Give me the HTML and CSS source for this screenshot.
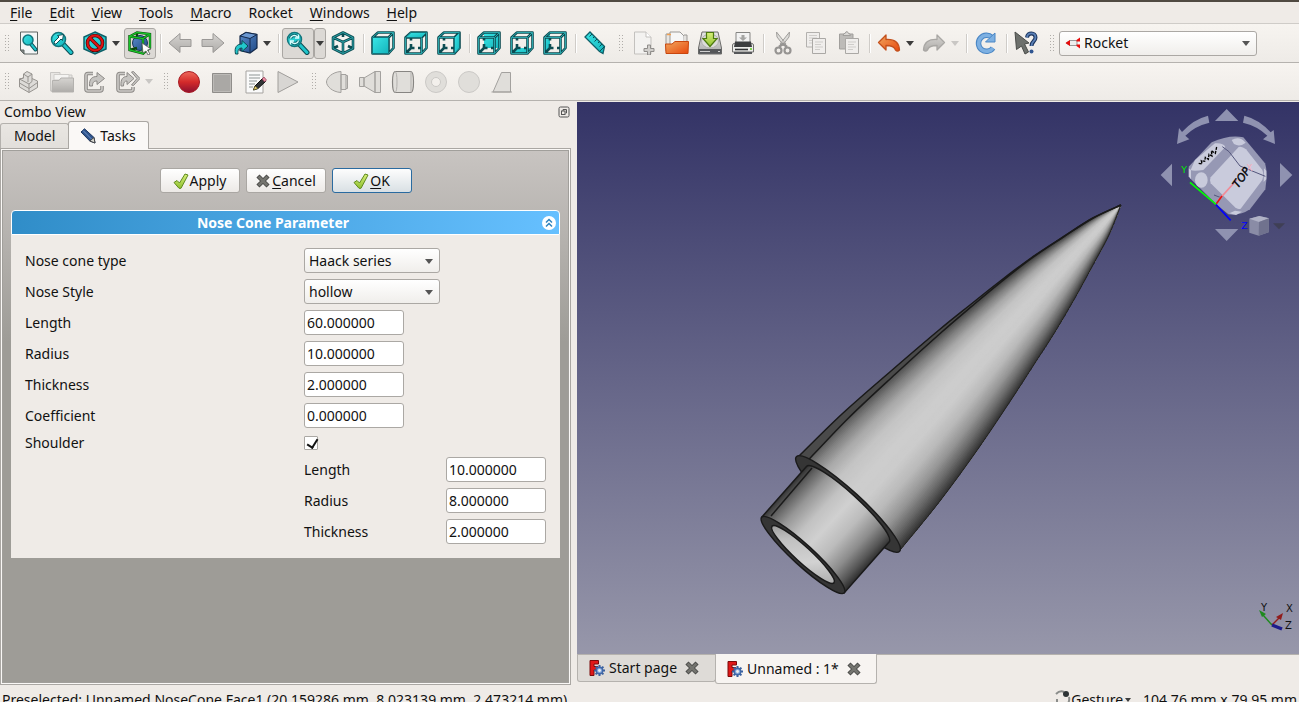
FILE: index.html
```html
<!DOCTYPE html>
<html lang="en">
<head>
<meta charset="utf-8">
<title>FreeCAD</title>
<link rel="stylesheet" href="styles.css">
</head>
<body>
<svg class="defs" aria-hidden="true">
  <defs>
    <linearGradient id="g-teal" x1="0" y1="0" x2="1" y2="1"><stop offset="0" stop-color="#3ae6e6"/><stop offset="1" stop-color="#14b4bc"/></linearGradient>
    <linearGradient id="g-orange" x1="0" y1="0" x2="1" y2="1"><stop offset="0" stop-color="#f0a860"/><stop offset="1" stop-color="#e8480c"/></linearGradient>
    <linearGradient id="g-gray" x1="0" y1="0" x2="0" y2="1"><stop offset="0" stop-color="#d6d4d1"/><stop offset="1" stop-color="#aeaca9"/></linearGradient>
    <linearGradient id="g-red" x1="0" y1="0" x2="0" y2="1"><stop offset="0" stop-color="#ee6a5c"/><stop offset=".5" stop-color="#d42a2a"/><stop offset="1" stop-color="#8e1030"/></linearGradient>
    <linearGradient id="g-metal" x1="0" y1="0" x2="0" y2="1"><stop offset="0" stop-color="#e8e8e8"/><stop offset="1" stop-color="#a8a8a8"/></linearGradient>
    <linearGradient id="g-green" x1="0" y1="0" x2="0" y2="1"><stop offset="0" stop-color="#d8f07a"/><stop offset="1" stop-color="#8fc030"/></linearGradient>
    <linearGradient id="g-blue" x1="0" y1="0" x2="1" y2="1"><stop offset="0" stop-color="#5b8ccb"/><stop offset="1" stop-color="#204a87"/></linearGradient>
    <symbol id="frame" viewBox="0 0 24 24">
      <path class="edge-dark" d="M1.500 22.500L7 17V13M7 9.500V6.500M7 17H10.500M14 17H17.500M1.500 6.500H17.500V22.500H1.500ZM1.500 6.500L7 1.500H22.500V17L17.500 22.500M17.500 6.500L22.500 1.500"/>
      <path class="edge-teal" d="M1.500 6.500H17.500V22.500H1.500ZM1.500 6.500L7 1.500H22.500V17L17.500 22.500M17.500 6.500L22.500 1.500"/>
    </symbol>
    <symbol id="lens" viewBox="0 0 24 24">
      <path d="M14 14L21 21.500" stroke="#0b4d54" stroke-width="5" stroke-linecap="round"/>
      <path d="M14 14L21 21.500" stroke="#1fc4ca" stroke-width="3" stroke-linecap="round"/>
      <circle cx="8.500" cy="8.500" r="7" fill="url(#g-teal)" stroke="#12757c" stroke-width="1.500"/>
    </symbol>
    <symbol id="tick" viewBox="0 0 16 16">
      <path d="M1 9.500L4 7.500L6.500 10L12 1L15 2L8 15.300L6 15.300Z" fill="url(#g-green)" stroke="#5f8a1e" stroke-linejoin="round"/>
    </symbol>
    <symbol id="cross" viewBox="0 0 14 14">
      <path d="M3.500 3.500L10.500 10.500M10.500 3.500L3.500 10.500" stroke="#4c4c4a" stroke-width="4.400" stroke-linecap="square"/>
      <path d="M3.500 3.500L10.500 10.500M10.500 3.500L3.500 10.500" stroke="#74746f" stroke-width="2.600" stroke-linecap="square"/>
    </symbol>
    <symbol id="logo" viewBox="0 0 16 16">
      <path d="M1 .5H9.500V4H5V6.500H8.500V10H5V15.500H1Z" fill="#e01818" stroke="#7a0a0a"/>
      <path d="M10.500 5V16M5 10.500H16M6.600 6.600L14.400 14.400M14.400 6.600L6.600 14.400" stroke="#3a5f9c" stroke-width="2"/>
      <circle cx="10.500" cy="10.500" r="3.200" fill="#86a8dc" stroke="#4068a8" stroke-width="1.400"/>
      <circle cx="10.500" cy="10.500" r="1.400" fill="#eee"/>
    </symbol>
    <symbol id="sheet" viewBox="0 0 24 24">
      <path d="M2.500 1H14L19 6V23H2.500Z" fill="#f3f2f0" stroke="#c3c1be"/><path d="M14 1V6H19" fill="#fff" stroke="#c3c1be"/>
    </symbol>
  </defs>
</svg>

<div class="app">
  <nav class="menubar" aria-label="Main menu">
    <button><u>F</u>ile</button><button><u>E</u>dit</button><button><u>V</u>iew</button><button><u>T</u>ools</button><button><u>M</u>acro</button><button>Rocket</button><button><u>W</u>indows</button><button><u>H</u>elp</button>
  </nav>

  <div class="toolbar" role="toolbar" aria-label="View and file">
    <span class="grip grip-first"></span>
    <button class="tool" aria-label="Fit all"><svg viewBox="0 0 24 24"><path d="M3.500 1H20.500V23H7L3.500 19Z" fill="#f4f6f6" stroke="#5d6462"/><path d="M3.500 19H7V23Z" fill="#8a8f8c" stroke="#5d6462"/><path d="M14 13L18.500 18.500" stroke="#0b4d54" stroke-width="4" stroke-linecap="round"/><path d="M14 13L18.500 18.500" stroke="#1fc4ca" stroke-width="2" stroke-linecap="round"/><circle cx="11" cy="9" r="5" fill="url(#g-teal)" stroke="#12757c" stroke-width="1.500"/></svg></button>
    <button class="tool" aria-label="Fit selection"><svg viewBox="0 0 24 24"><use href="#lens"/><path d="M4.500 13L4 11L9 6L7.500 4.500L13.500 3.500L12.500 9.500L11 8L6 13Z" fill="#fff" stroke="#0b4d54"/></svg></button>
    <button class="tool has-arrow" aria-label="Draw style"><svg viewBox="0 0 24 24"><path d="M12 1L23 6V18L12 23L1 18V6Z" fill="url(#g-teal)" stroke="#0e5f68" stroke-width="1.500"/><circle cx="12" cy="12" r="7.500" fill="none" stroke="#5a0808" stroke-width="3.600"/><path d="M6.500 6.500L17.500 17.500" stroke="#5a0808" stroke-width="3.600"/><circle cx="12" cy="12" r="7.500" fill="none" stroke="#e01414" stroke-width="2"/><path d="M6.500 6.500L17.500 17.500" stroke="#e01414" stroke-width="2"/></svg><i class="caret"></i></button>
    <button class="tool pressed" aria-pressed="true" aria-label="Selection bounding box"><svg viewBox="0 0 24 24"><circle cx="12" cy="12" r="7.500" fill="url(#g-blue)" stroke="#16325c"/><path d="M1.500 5.500L15 7.500V22.500L1.500 19ZM1.500 5.500L9 1.500L22 3V17L15 22.500M15 7.500L22 3M9 1.500V5M9 17L1.500 19" fill="none" stroke="#0b4a0b" stroke-width="2.400"/><path d="M1.500 5.500L15 7.500V22.500L1.500 19ZM1.500 5.500L9 1.500L22 3V17L15 22.500M15 7.500L22 3" fill="none" stroke="#19c42a" stroke-width="1.400"/><path d="M14 12L23 18L19.500 19L22 23L20 24L18 20L15 22Z" fill="#fff" stroke="#555" stroke-width=".8"/></svg></button>
    <span class="sep"></span>
    <button class="tool" aria-label="Back"><svg viewBox="0 0 24 24"><path d="M1 12L12 2.500V8.500H23V15.500H12V21.500Z" fill="url(#g-gray)" stroke="#9a9896"/></svg></button>
    <button class="tool" aria-label="Forward"><svg viewBox="0 0 24 24"><path d="M23 12L12 2.500V8.500H1V15.500H12V21.500Z" fill="url(#g-gray)" stroke="#9a9896"/></svg></button>
    <button class="tool has-arrow" aria-label="Go to linked object"><svg viewBox="0 0 24 24"><path d="M6 5L12 1.500L23 3.500V17L16 22L6 19.500Z" fill="url(#g-blue)" stroke="#14294a" stroke-width="1.200"/><path d="M6 5L16 7.500L23 3.500L12 1.500Z" fill="#6b98d2" stroke="#14294a"/><path d="M16 7.500V22" stroke="#14294a"/><path d="M1.500 23C0 16 3 13 8 13V9.500L14 15L8 20.500V17C5 17 3.500 19 4 23Z" fill="#22c8cc" stroke="#0b4d54"/></svg><i class="caret"></i></button>
    <span class="sep"></span>
    <span class="split"><button class="tool pressed" aria-label="Zoom"><svg viewBox="0 0 24 24"><use href="#lens"/><path d="M4.500 7.500C5 4.500 9 3.500 11.500 6M12.500 9.500C12 12.500 8 13.500 5.500 11" fill="none" stroke="#0e6a70" stroke-width="3.400"/><path d="M4.500 7.500C5 4.500 9 3.500 11.500 6M12.500 9.500C12 12.500 8 13.500 5.500 11M12.500 3.500V7H9M4.500 13.500V10H8" fill="none" stroke="#d9ffff" stroke-width="1.400"/></svg></button><button class="drop pressed" aria-label="Zoom options"><i class="caret"></i></button></span>
    <button class="tool" aria-label="Isometric"><svg viewBox="0 0 24 24"><path d="M12 1.500L22 6.500V17.500L12 22.500L2 17.500V6.500Z" fill="#f5f3f0"/><path class="edge-dark" d="M12 1.500L22 6.500V17.500L12 22.500L2 17.500V6.500ZM2 6.500L12 11L22 6.500M12 11V22.500M12 1.500V6M2 17.500L7 15M22 17.500L17 15"/><path class="edge-teal" d="M12 1.500L22 6.500V17.500L12 22.500L2 17.500V6.500ZM2 6.500L12 11L22 6.500M12 11V22.500"/></svg></button>
    <span class="sep"></span>
    <button class="tool" aria-label="Front"><svg viewBox="0 0 24 24"><use href="#frame"/><path d="M1.500 6.500H17.500V22.500H1.500Z" fill="url(#g-teal)" stroke="#12757c"/></svg></button>
    <button class="tool" aria-label="Top"><svg viewBox="0 0 24 24"><use href="#frame"/><path d="M1.500 6.500L7 1.500H22.500L17.500 6.500Z" fill="url(#g-teal)" stroke="#12757c"/></svg></button>
    <button class="tool" aria-label="Right"><svg viewBox="0 0 24 24"><use href="#frame"/><path d="M17.500 6.500L22.500 1.500V17L17.500 22.500Z" fill="url(#g-teal)" stroke="#12757c"/></svg></button>
    <span class="sep"></span>
    <button class="tool" aria-label="Rear"><svg viewBox="0 0 24 24"><path d="M7 1.500H22.500V17H7Z" fill="url(#g-teal)"/><use href="#frame"/></svg></button>
    <button class="tool" aria-label="Bottom"><svg viewBox="0 0 24 24"><path d="M1.500 22.500L7 17H22.500L17.500 22.500Z" fill="url(#g-teal)"/><use href="#frame"/></svg></button>
    <button class="tool" aria-label="Left"><svg viewBox="0 0 24 24"><path d="M1.500 6.500L7 1.500V17L1.500 22.500Z" fill="url(#g-teal)"/><use href="#frame"/></svg></button>
    <span class="sep"></span>
    <button class="tool" aria-label="Measure distance"><svg viewBox="0 0 24 24"><path d="M2 6L7 1L21.500 15.500L20 22.500L16.500 20.500Z" fill="url(#g-teal)" stroke="#0e5f68" stroke-width="1.300"/><path d="M9 3L6.500 5.500M11.500 5.500L10 7M14 8L11.500 10.500M16.500 10.500L15 12M19 13L16.500 15.500M16.500 20.500L21.500 15.500" stroke="#0b4d54"/></svg></button>
    <span class="grip"></span>
    <button class="tool" aria-label="New"><svg viewBox="0 0 24 24"><use href="#sheet"/><path d="M15.500 14H18.500V17.500H22V20.500H18.500V24H15.500V20.500H12V17.500H15.500Z" fill="#d0cecb" stroke="#8f8d8a"/></svg></button>
    <button class="tool" aria-label="Open"><svg viewBox="0 0 24 24"><path d="M1 3H8V20H1Z" fill="#e8e6e3" stroke="#9b9996"/><path d="M5 1H15L19 5V16H5Z" fill="#f6f6f6" stroke="#9b9996"/><path d="M19 4H22V18H18" fill="#e4e2df" stroke="#9b9996"/><path d="M2 3.500H6" stroke="#f0a050" stroke-width="1.500"/><path d="M.5 13H7L10 10.500H23.500L23 22.500H1Z" fill="url(#g-orange)" stroke="#c8460e"/></svg></button>
    <button class="tool" aria-label="Save"><svg viewBox="0 0 24 24"><path d="M4 1H20L23.500 17V23H.5V17Z" fill="url(#g-metal)" stroke="#6d6d6b"/><path d="M.8 18H23.200V22.700H.8Z" fill="#55575a"/><path d="M2 20.500H12M20 20.500H22" stroke="#d0d0d0"/><ellipse cx="12" cy="10" rx="8.500" ry="7" fill="#dcdcda" stroke="#b0b0ae"/><path d="M8.500 1.500H15.500V7.500H19L12 15.500L5 7.500H8.500Z" fill="url(#g-green)" stroke="#4c7a10" stroke-width="1.200"/></svg></button>
    <button class="tool" aria-label="Print"><svg viewBox="0 0 24 24"><path d="M5 1.500H19V13H5Z" fill="#f2f2f2" stroke="#858583"/><path d="M10.500 4H13.500V6.500H16L12 10L8 6.500H10.500Z" fill="#a4a4a2"/><path d="M1.500 14Q1.500 12.500 3.500 12.500H20.500Q22.500 12.500 22.500 14V21H1.500Z" fill="#ececea" stroke="#70706e"/><path d="M4 10.500H20L21 16H3Z" fill="#3c3e40"/><path d="M4 18.500H17" stroke="#303234" stroke-width="1.600"/><path d="M3 21H21V23H3Z" fill="#55575a"/><circle cx="20" cy="18" r="1" fill="#5fd020"/></svg></button>
    <span class="sep"></span>
    <button class="tool" aria-label="Cut"><svg viewBox="0 0 24 24"><path d="M5.500 1L6 6L13 15L15 13ZM18.500 1L18 6L11 15L9 13Z" fill="#deddda" stroke="#a09e9b"/><circle cx="7.500" cy="19.500" r="3" fill="none" stroke="#969492" stroke-width="2.200"/><circle cx="16.500" cy="19.500" r="3" fill="none" stroke="#969492" stroke-width="2.200"/><path d="M8 16L12 12.500L16 16" fill="none" stroke="#969492" stroke-width="2.400"/></svg></button>
    <button class="tool" aria-label="Copy"><svg viewBox="0 0 24 24"><path d="M2.500 1.500H15.500V16H2.500Z" fill="#f0eeec" stroke="#b3b1ae"/><path d="M5 4.500H13M5 7H13M5 9.500H8M5 12H8" stroke="#cfcdca"/><path d="M8.500 7.500H21.500V22.500H8.500Z" fill="#f0eeec" stroke="#aaa8a5"/><path d="M11 11H19M11 13.500H17M11 16H19M11 18.500H16" stroke="#cfcdca"/></svg></button>
    <button class="tool" aria-label="Paste"><svg viewBox="0 0 24 24"><path d="M2.500 3H16V18H2.500Z" fill="#bdbbb8" stroke="#a19f9c"/><path d="M6 4.500L7 2.500H8L9 .8H10.500L11.500 2.500H12.500L13.500 4.500Z" fill="#dad8d5" stroke="#a19f9c"/><path d="M8.500 7.500H21.500V22.500H8.500Z" fill="#f0eeec" stroke="#aaa8a5"/><path d="M11 11H19M11 13.500H17M11 16H19M11 18.500H16" stroke="#cfcdca"/></svg></button>
    <span class="sep"></span>
    <button class="tool has-arrow" aria-label="Undo"><svg viewBox="0 0 24 24"><path d="M1.500 11.500L9 4V8.500C17 8 22 11 22.500 19Q20.500 21 18.500 19C17.500 15.500 14.500 14.500 9 14.500V19Z" fill="url(#g-orange)" stroke="#c4501c" stroke-width="1.300" stroke-linejoin="round"/></svg><i class="caret"></i></button>
    <button class="tool has-arrow" aria-label="Redo" disabled><svg viewBox="0 0 24 24"><path d="M22.500 11.500L15 4V8.500C7 8 2 11 1.500 19Q3.500 21 5.500 19C6.500 15.500 9.500 14.500 15 14.500V19Z" fill="url(#g-gray)" stroke="#a9a7a4" stroke-width="1.300" stroke-linejoin="round"/></svg><i class="caret"></i></button>
    <span class="sep"></span>
    <button class="tool" aria-label="Refresh"><svg viewBox="0 0 24 24"><path d="M18 6.500A8 8 0 1 0 19 17" fill="none" stroke="#4a86c4" stroke-width="5.500"/><path d="M18 6.500A8 8 0 1 0 19 17" fill="none" stroke="#7db0e2" stroke-width="3.500"/><path d="M21 2V11H11.500L15 7.500Z" fill="#7db0e2" stroke="#4a86c4"/></svg></button>
    <span class="sep"></span>
    <button class="tool" aria-label="What's this?"><svg viewBox="0 0 24 24"><path d="M13 6.500C13.500 1 21.500 1 21.500 6.500C21.500 10.500 17.500 10 17.500 15" fill="none" stroke="#1c355e" stroke-width="4"/><path d="M13 6.500C13.500 1 21.500 1 21.500 6.500C21.500 10.500 17.500 10 17.500 15" fill="none" stroke="#5c82b8" stroke-width="1.800"/><circle cx="17.500" cy="20.500" r="2" fill="#2f5590"/><path d="M1 1L15 12L10.500 13L14.500 21L11 23L7.500 15L2.500 18.500Z" fill="#6d706c" stroke="#4a4c49"/></svg></button>
    <span class="grip"></span>
    <span class="combo combo-workbench"><svg viewBox="0 0 16 12" aria-hidden="true"><path d="M1 6L5 3.500H12V8.500H5Z" fill="#eee" stroke="#999"/><path d="M.5 6L5 3V9ZM11.500 3L15 .5V4.500H11.500ZM11.500 9L15 11.500V7.500H11.500Z" fill="#e80c0c"/></svg><select aria-label="Workbench"><option>Rocket</option></select></span>
  </div>

  <div class="toolbar" role="toolbar" aria-label="Structure, macro and rocket">
    <span class="grip grip-first"></span>
    <button class="tool" aria-label="Create part"><svg viewBox="0 0 24 24"><path d="M2.500 9V17L12 22.500L20.500 17.500V11L15 8.500V4L10 1.500L6.500 4V8Z" fill="#dddbd8" stroke="#96938f"/><path d="M2.500 13L12 18.500L20.500 12.500M12 18.500V22.500M6.500 4L11 7L15 4M11 7V12M6.500 8L2.500 9L12 14L15 11.500V8.500M12 14V18.500" fill="none" stroke="#96938f"/></svg></button>
    <button class="tool" aria-label="Create group"><svg viewBox="0 0 24 24"><path d="M.5 2.500H10V5H22V21H.5Z" fill="#e8e6e3" stroke="#c9c7c4"/><path d="M4 4.500H19V10H4Z" fill="#f5f4f2" stroke="#cfcdca"/><path d="M2.500 10.500H9L11 8H23.500V22H2Z" fill="url(#g-gray)" stroke="#b3b1ae"/></svg></button>
    <button class="tool" aria-label="Make link"><svg viewBox="0 0 24 24"><path d="M10 3.500H5Q3 3.500 3 5.500V19Q3 21 5 21H17Q19 21 19 19V16" fill="none" stroke="#8d8a87" stroke-width="3.600"/><path d="M10 3.500H5Q3 3.500 3 5.500V19Q3 21 5 21H17Q19 21 19 19V16" fill="none" stroke="#cbc9c6" stroke-width="1.600"/><path d="M6.500 16C6 9 9 6.500 14 6.500V2.500L21.500 8.500L14 14.500V11C10.500 11 9.500 12.500 9.500 16Z" fill="#c6c4c1" stroke="#8d8a87"/></svg></button>
    <button class="tool has-arrow" aria-label="Make sub-link" disabled><svg viewBox="0 0 24 24"><path d="M9 3.500H4Q2 3.500 2 5.500V19Q2 21 4 21H15Q17 21 17 19V17" fill="none" stroke="#8d8a87" stroke-width="3.600"/><path d="M9 3.500H4Q2 3.500 2 5.500V19Q2 21 4 21H15Q17 21 17 19V17" fill="none" stroke="#cbc9c6" stroke-width="1.600"/><path d="M5 16C4.500 9 7 6.500 11 6.500V2.500L18 8.500L11 14.500V11C8.500 11 7.500 12.500 7.500 16ZM15.500 2L17.500 1.500L24 8.500L17.500 15.500L15.500 15L21 8.500Z" fill="#c6c4c1" stroke="#8d8a87"/></svg><i class="caret"></i></button>
    <span class="grip"></span>
    <button class="tool" aria-label="Record macro"><svg viewBox="0 0 24 24"><circle cx="12" cy="12" r="10.500" fill="url(#g-red)" stroke="#a81c24"/></svg></button>
    <button class="tool" aria-label="Stop macro"><svg viewBox="0 0 24 24"><path d="M2.500 3.500H21.500V22.500H2.500Z" fill="#aaa8a5" stroke="#8f8d8a"/><path d="M3.500 4.500H20.500V21.500H3.500Z" fill="none" stroke="#bcbab7"/></svg></button>
    <button class="tool" aria-label="Macros"><svg viewBox="0 0 24 24"><path d="M3 1H20V23H3Z" fill="#fafafa" stroke="#a5a3a0"/><path d="M6 5H17M6 8H17M6 11H14M6 14H12M6 17H10" stroke="#8d9494"/><path d="M10.500 20L12 16L19.500 8.500L22.500 11.500L15 18.500Z" fill="#303436" stroke="#111"/><path d="M10.500 20L12 16L15 18.500Z" fill="#e8d070" stroke="#55501c" stroke-width=".6"/><path d="M19 9L21 7L23.500 10L21.500 12Z" fill="#e88aa0" stroke="#803048" stroke-width=".6"/></svg></button>
    <button class="tool" aria-label="Execute macro"><svg viewBox="0 0 24 24"><path d="M2 1.500L22 12L2 22.500Z" fill="#d8d6d3" stroke="#a09e9b"/></svg></button>
    <span class="grip"></span>
    <button class="tool" aria-label="Nose cone"><svg viewBox="0 0 24 24"><path d="M16 1.500C7 2 1.500 8 1.500 12S7 22 16 22.500ZM16 4.500H21V19.500H16ZM21 5.500H22.500V18.500H21" fill="#e0deda" stroke="#a3a19e"/></svg></button>
    <button class="tool" aria-label="Transition"><svg viewBox="0 0 24 24"><path d="M17 1.500V22.500L6 16V8ZM17 1.500H22.500V22.500H17ZM6 7.500V16.500H1.500V7.500Z" fill="#e0deda" stroke="#a3a19e"/></svg></button>
    <button class="tool" aria-label="Body tube"><svg viewBox="0 0 24 24"><path d="M4 1.500H20Q22.500 2 22.500 12T20 22.500H4Q1.500 22 1.500 12T4 1.500Z" fill="#e0deda" stroke="#878582" stroke-width="1.200"/><path d="M4 1.500Q6 2 6 12T4 22.500M20 1.500V22" fill="none" stroke="#b3b1ae"/></svg></button>
    <button class="tool" aria-label="Centering ring"><svg viewBox="0 0 24 24"><circle cx="12" cy="12" r="10.500" fill="#e0deda" stroke="#cbc9c6"/><circle cx="12" cy="12" r="4.500" fill="#f3f0ec" stroke="#cbc9c6"/></svg></button>
    <button class="tool" aria-label="Bulkhead"><svg viewBox="0 0 24 24"><circle cx="12" cy="12" r="10.500" fill="#e0deda" stroke="#cbc9c6"/></svg></button>
    <button class="tool" aria-label="Fin"><svg viewBox="0 0 24 24"><path d="M3 22L11.500 2.500H20.500V22Z" fill="#e0deda" stroke="#a3a19e"/><path d="M1.500 22H22" stroke="#a3a19e"/></svg></button>
  </div>

  <main class="workspace">
    <section class="dock">
      <header class="dock-title"><span>Combo View</span>
        <button class="float" aria-label="Float panel"><svg viewBox="0 0 12 12"><rect x="1" y="1" width="10" height="10" rx="1.500"/><path d="M5 5V3.500H8.500V7H7.500"/><rect x="3.500" y="5" width="3.500" height="3.500"/></svg></button>
      </header>
      <div class="tabs" role="tablist">
        <button class="tab" role="tab">Model</button>
        <button class="tab active" role="tab" aria-selected="true"><svg viewBox="0 0 16 16"><path d="M1 4L4.500 .8L14 9.500L15 15L9.800 13Z" fill="#2f548c" stroke="#1b3560"/><path d="M3 2.500L12 11.500" stroke="#6f93c8"/><path d="M14 9.500L15 15L9.800 13Z" fill="#d8d8d0" stroke="#444"/></svg>Tasks</button>
      </div>
      <div class="pane">
        <div class="tasks">
          <div class="actions">
            <button class="push"><svg class="i16" viewBox="0 0 16 16"><use href="#tick"/></svg>Apply</button>
            <button class="push"><svg class="i16" viewBox="-1 -1 16 16"><use href="#cross" width="14" height="14"/></svg><span><u>C</u>ancel</span></button>
            <button class="push default"><svg class="i16" viewBox="0 0 16 16"><use href="#tick"/></svg><span><u>O</u>K</span></button>
          </div>
          <section class="group">
            <header class="group-head"><h2>Nose Cone Parameter</h2>
              <button class="fold" aria-label="Collapse"><svg viewBox="0 0 14 14"><path d="M4 6.500L7 3.500L10 6.500M4 10.500L7 7.500L10 10.500"/></svg></button>
            </header>
            <form class="form">
              <label for="type">Nose cone type</label><span class="combo"><select id="type"><option>Haack series</option></select></span>
              <label for="style">Nose Style</label><span class="combo"><select id="style"><option>hollow</option></select></span>
              <label for="len">Length</label><input id="len" value="60.000000">
              <label for="rad">Radius</label><input id="rad" value="10.000000">
              <label for="thk">Thickness</label><input id="thk" value="2.000000">
              <label for="coef">Coefficient</label><input id="coef" value="0.000000">
              <label class="short" for="sh">Shoulder</label><input class="check" id="sh" type="checkbox" checked>
              <label class="sub" for="slen">Length</label><input id="slen" value="10.000000">
              <label class="sub" for="srad">Radius</label><input id="srad" value="8.000000">
              <label class="sub" for="sthk">Thickness</label><input id="sthk" value="2.000000">
            </form>
          </section>
        </div>
      </div>
    </section>

    <section class="document">
      <div class="viewport">
        <svg class="scene" viewBox="577 102 722 552" role="img" aria-label="Nose cone model">
          <defs>
            <linearGradient id="tube" gradientUnits="userSpaceOnUse" x1="807" y1="466" x2="889" y2="542">
              <stop offset="0" stop-color="#303030"/><stop offset=".08" stop-color="#606060"/><stop offset=".2" stop-color="#969696"/><stop offset=".36" stop-color="#c2c2c2"/><stop offset=".5" stop-color="#d0d0d0"/><stop offset=".66" stop-color="#bcbcbc"/><stop offset=".82" stop-color="#8c8c8c"/><stop offset=".94" stop-color="#555"/><stop offset="1" stop-color="#333"/>
            </linearGradient>
            <linearGradient id="bore" gradientUnits="userSpaceOnUse" x1="772" y1="526" x2="834" y2="583">
              <stop offset="0" stop-color="#858585"/><stop offset=".3" stop-color="#c0c0c0"/><stop offset=".6" stop-color="#d2d2d2"/><stop offset="1" stop-color="#9c9c9c"/>
            </linearGradient>
          </defs>
          <g id="cone"></g>
          <g stroke="#1a1a1a" stroke-width="1.500">
            <ellipse cx="848" cy="504" rx="70" ry="13" transform="rotate(42.500 848 504)" fill="#353535"/>
            <path d="M806.700 466.200A56 10.400 42.500 0 1 889.300 541.800L844.300 592.800L761.700 517.200Z" fill="url(#tube)"/>
            <path d="M812 468L771 516" fill="none"/>
            <ellipse cx="803" cy="555" rx="56" ry="10.400" transform="rotate(42.500 803 555)" fill="#353535"/>
            <ellipse cx="803" cy="554.500" rx="42" ry="7.800" transform="rotate(42.500 803 554.500)" fill="url(#bore)"/>
          </g>
        </svg>
        <svg class="navcube" viewBox="0 6 477 444" role="img" aria-label="Navigation cube">
          <g fill="#8f92b0">
            <path d="M260 27L295 63H225ZM260 423L295 387H225ZM62 225L96 191V259ZM457 225L420 189V261Z"/>
            <path d="M204 47L208 68Q165 78 136 107L148 118L111 132L117 84L126 96Q160 58 204 47ZM313 47L309 68Q352 78 382 107L369 118L405 132L401 90L392 97Q357 58 313 47Z"/>
          </g>
          <path d="M146 200L215 127Q270 102 310 112L375 190Q384 215 376 268L330 328Q300 348 265 343L228 312L150 235Z" fill="#9698b4"/>
          <path d="M165 180L225 130Q250 128 256 141L190 210Q160 215 152 210Z" fill="#c9cbdc"/>
          <path d="M296 141Q306 138 318 148L367 210Q372 222 367 240L302 326Q294 330 285 322L212 250Q208 240 212 232Z" fill="#c9cbdc"/>
          <path d="M275 120Q298 106 317 128Q300 142 282 132ZM372 205L379 212V238L371 246ZM268 340L285 332L306 335L288 345ZM146 205L153 210V236L146 230Z" fill="#c9cbdc"/>
          <ellipse cx="184" cy="240" rx="19" ry="23" fill="#c9cbdc"/>
          <path d="M247 140L267 155L300 198L376 229M222 285L240 292" fill="none" stroke="#54567c" stroke-width="3"/>
          <path d="M290 240L234 302" stroke="#f08c98" stroke-width="5"/><path d="M246 288L228 313" stroke="#e01414" stroke-width="5"/>
          <path d="M150 247L228 313" stroke="#0f0" stroke-width="5"/><path d="M228 314L272 361" stroke="#00f" stroke-width="5"/>
          <g class="navtext"><text x="124" y="218" fill="#0e0">Y</text><text x="319" y="212" fill="#f3aebb">X</text><text x="304" y="387" fill="#00f">Z</text></g>
          <text class="navtop" transform="translate(294 266) rotate(-54)">TOP</text>
          <path d="M176 190L186 192L184 182L194 184L196 172L205 178L207 163L216 168L214 152L226 160L230 141" fill="none" stroke="#000" stroke-width="4" stroke-dasharray="9 3"/>
          <path d="M328 356L358 348L387 355L386 397L356 407L328 398Z" fill="#8a8ca6"/><path d="M328 356L358 348L387 355L357 366Z" fill="#b0b2c6"/><path d="M357 366L387 355L386 397L356 407Z" fill="#70728e"/>
          <path d="M399 370H435L417 388Z" fill="#3f3f55"/>
        </svg>
        <svg class="axes" viewBox="0 0 36 30" role="img" aria-label="Axis cross"><path d="M14 22L5 12" stroke="#1e8a1e" stroke-width="1.500"/><path d="M1 7L8 11L4 14Z" fill="#1e8a1e"/><path d="M14 22L21 15" stroke="#901c1c" stroke-width="1.500"/><path d="M25 10L23 17L18 14Z" fill="#901c1c"/><path d="M14 22L24 26" stroke="#1c1c8c" stroke-width="3.500"/><g class="axtext"><text x="3" y="8">Y</text><text x="28" y="9">X</text><text x="27" y="26">Z</text></g></svg>
      </div>
      <div class="doctabs">
        <div class="doctab"><svg class="i16" viewBox="0 0 16 16"><use href="#logo"/></svg><span>Start page</span><button aria-label="Close Start page"><svg viewBox="0 0 14 14"><use href="#cross"/></svg></button></div>
        <div class="doctab active"><svg class="i16" viewBox="0 0 16 16"><use href="#logo"/></svg><span>Unnamed : 1*</span><button aria-label="Close Unnamed"><svg viewBox="0 0 14 14"><use href="#cross"/></svg></button></div>
      </div>
    </section>
  </main>

  <footer class="status"><span>Preselected: Unnamed.NoseCone.Face1 (20.159286 mm, 8.023139 mm, 2.473214 mm)</span>
    <span class="status-right"><button class="nav-style"><svg class="i16" viewBox="0 0 16 16"><path d="M1 4Q5 0 9 2M2 9V15M14 7Q15 11 12 15" fill="none" stroke="#8b8d8b" stroke-width="2"/><circle cx="11" cy="4" r="3" fill="#2e3436"/></svg>Gesture<i class="caret"></i></button><span>104.76 mm x 79.95 mm</span></span>
  </footer>
</div>
<script src="cone.js"></script>
</body>
</html>
```
FILE: cone.js
```js
// Shades the nose cone as a series of lengthwise bands between its two outlines.
const left = [[797,458],[842,414],[891,371],[939,330],[970,305],[999,282],[1031,258],[1063,237],[1093,218],[1121,205]];
const right = [[901,549],[940,501],[978,449],[1013,397],[1035,363],[1055,332],[1075,298],[1093,265],[1109,235],[1121,205]];
const shades = [[0, 55], [0.05, 84], [0.12, 126], [0.21, 168], [0.32, 196], [0.45, 205], [0.57, 204], [0.7, 186], [0.82, 148], [0.91, 104], [0.97, 68], [1, 48]];
const svgNs = 'http://www.w3.org/2000/svg';
const cone = document.getElementById('cone');

const between = (t) => left.map((p, i) => p.map((v, k) => v + (right[i][k] - v) * t));

// Catmull-Rom spline through the points, written as cubic segments.
function curve(points) {
  let d = '';
  for (let i = 0; i < points.length - 1; i++) {
    const a = points[Math.max(i - 1, 0)], b = points[i];
    const c = points[i + 1], e = points[Math.min(i + 2, points.length - 1)];
    d += `C${b[0] + (c[0] - a[0]) / 6} ${b[1] + (c[1] - a[1]) / 6} ${c[0] - (e[0] - b[0]) / 6} ${c[1] - (e[1] - b[1]) / 6} ${c[0]} ${c[1]}`;
  }
  return d;
}

function shade(t) {
  const i = Math.max(1, shades.findIndex((s) => s[0] >= t));
  const [t0, v0] = shades[i - 1], [t1, v1] = shades[i];
  return Math.round(v0 + (v1 - v0) * (t - t0) / (t1 - t0));
}

function draw(d, attributes) {
  const path = document.createElementNS(svgNs, 'path');
  path.setAttribute('d', d);
  Object.entries(attributes).forEach(([k, v]) => path.setAttribute(k, v));
  cone.append(path);
}

const open = (points) => `M${points[0]}${curve(points)}`;
const rightBack = curve([...right].reverse());
const count = 90;
for (let n = 0; n < count; n++) {
  const v = shade((n + 0.5) / count);
  draw(`${open(between(n / count))}${rightBack}Z`, { fill: `rgb(${v},${v},${v})` });
}
const seam = left.map((p, i) => {
  const t = 0.07 * (1 - i / (left.length - 1)) ** 1.8;
  return p.map((v, k) => v + (right[i][k] - v) * t);
});
draw(`${open(left)}${curve([...seam].reverse())}Z`, { fill: '#4a4a4a' });
draw(open(left), { fill: 'none', stroke: '#1a1a1a', 'stroke-width': 1.5 });
draw(open(seam), { fill: 'none', stroke: '#1a1a1a', 'stroke-width': 1.5 });
draw(open(right), { fill: 'none', stroke: '#222', 'stroke-width': 1 });
```
FILE: styles.css
```css
* { box-sizing: border-box; }
body { margin: 0; background: #efebe7; color: #111; font: 14px/20px "Noto Sans", "Open Sans", sans-serif; }
button, input, select { font: inherit; color: inherit; margin: 0; }
button { border: 0; padding: 0; background: none; }
svg { display: block; flex: none; fill: none; }
u { text-underline-offset: 2px; }
.defs { position: absolute; width: 0; height: 0; }
.edge-dark { fill: none; stroke: #0c4c52; stroke-width: 2.6; stroke-linejoin: round; }
.edge-teal { fill: none; stroke: #2ba5aa; stroke-width: 1; }
.i16 { width: 16px; height: 16px; }

.app { display: flex; flex-direction: column; height: 100vh; overflow: hidden; border-top: 2px solid #504a42; }
.menubar { display: flex; gap: 17px; padding: 1px 10px 0; height: 22px; border-bottom: 1px solid #cfccc8; }

.toolbar { display: flex; align-items: center; gap: 1px; height: 39px; border-bottom: 1px solid #b5b2ae; background: linear-gradient(#f7f4f0, #eeebe7); }
.toolbar + .toolbar { height: 38px; }
.tool { display: flex; align-items: center; justify-content: center; flex: none; width: 32px; height: 31px; border: 1px solid transparent; border-radius: 3px; }
.tool svg { width: 24px; height: 24px; }
.tool.has-arrow { justify-content: flex-start; width: 44px; gap: 5px; padding-left: 3px; }
.pressed { background: #dcd9d5; border: 1px solid #aaa7a3; border-radius: 3px; }
.split { display: flex; }
.drop { display: flex; align-items: center; justify-content: center; width: 12px; }
.caret { flex: none; border: 4px solid transparent; border-top: 5px solid #3c3c3c; border-bottom: 0; }
.tool:disabled .caret { border-top-color: #c9c7c4; }
.sep { flex: none; width: 6px; height: 19px; background: linear-gradient(90deg, transparent 3px, #cfccc8 3px, #cfccc8 4px, #fff 4px, #fff 5px, transparent 5px); }
.grip { flex: none; width: 5px; height: 17px; margin: 0 3px 0 7px; background: conic-gradient(from 270deg at 1px 1px, #b0ada9 90deg, transparent 0) 0 0 / 3px 3px; }
.grip-first { margin-left: 5px; margin-right: 2px; }

.combo { position: relative; display: block; }
.combo::after { content: ""; position: absolute; right: 7px; top: 50%; margin-top: -2px; border: 4px solid transparent; border-top: 5px solid #555; border-bottom: 0; pointer-events: none; }
.combo select { appearance: none; display: block; width: 100%; height: 25px; padding: 0 20px 0 4px; border: 1px solid #aba8a4; border-radius: 3px; background: linear-gradient(#fff, #f0eeeb); }
.combo-workbench { width: 198px; }
.combo-workbench svg { position: absolute; left: 6px; top: 6px; width: 16px; height: 12px; }
.combo-workbench select { padding-left: 24px; }

.workspace { flex: 1; min-height: 0; display: flex; gap: 6px; }
.dock { flex: none; width: 44vw; width: round(down, 44vw, 1px); display: flex; flex-direction: column; }
.dock-title { display: flex; justify-content: space-between; align-items: center; height: 20px; padding: 1px 1px 0 4px; }
.float svg { width: 12px; height: 12px; stroke: #555; }
.tabs { display: flex; align-items: flex-end; height: 27px; }
.tab { display: flex; align-items: center; justify-content: center; gap: 4px; height: 25px; padding: 0 13px; border: 1px solid #b4b1ad; border-bottom: 0; border-radius: 3px 3px 0 0; background: linear-gradient(#e9e6e2, #e2dfdb); }
.tab.active { position: relative; height: 28px; margin-left: -1px; margin-bottom: -1px; padding: 0 12px 0 11px; background: #faf8f6; border-color: #aaa7a3; }
.tab svg { width: 16px; height: 16px; }
.pane { flex: 1; min-height: 0; padding: 1px; border: 1px solid #aaa7a3; background: #faf8f6; }
.tasks { height: 100%; padding: 17px 8px; border: 1px solid #a19f9b; background: linear-gradient(#c8c4c1, #9e9c97 36%); }
.actions { display: flex; justify-content: center; gap: 6px; }
.push { display: flex; align-items: center; justify-content: center; gap: 1px; width: 80px; height: 25px; border: 1px solid #aaa7a3; border-radius: 3px; background: linear-gradient(#fff, #ece9e6); }
.push.default { border-color: #2a6ba0; background: linear-gradient(#fdfdfd, #d9e0e4); }
.group { margin-top: 17px; }
.group-head { display: flex; align-items: center; height: 25px; padding-right: 3px; border: 1px solid #fff; border-radius: 4px 4px 0 0; background: linear-gradient(90deg, #308dc8, #66c0ff); color: #fff; }
.group-head h2 { flex: 1; margin: 0 0 0 -8px; text-align: center; font-size: 14px; line-height: 20px; font-weight: 700; }
.fold svg { width: 14px; height: 14px; border-radius: 50%; background: #fff; stroke: #2f83bd; stroke-width: 1.5; }
.form { display: grid; grid-template-columns: 1fr 136px 100px; gap: 6px; align-items: center; padding: 13px 14px 14px; background: #efebe7; }
.form label, .form input { grid-column: 1; height: 25px; line-height: 25px; }
.form .combo, .form input { grid-column: 2; }
.form label.sub { grid-column: 2; }
.form label.sub + input { grid-column: 3; }
.form input { width: 100px; padding: 0 2px; border: 1px solid #aba8a4; border-radius: 3px; background: #fff; }
.form label.short { height: 17px; line-height: 17px; }
.form input.check { appearance: none; width: 14px; height: 14px; padding: 0; border-radius: 1px; position: relative; }
.check:checked::after { content: ""; position: absolute; left: 4px; top: 0; width: 5px; height: 9px; border: solid #111; border-width: 0 2px 2px 0; rotate: 32deg; }

.document { flex: 1; min-width: 0; display: flex; flex-direction: column; padding-top: 1px; }
.viewport { position: relative; flex: 1; min-height: 0; background: linear-gradient(#333366, #9797aa); }
.scene { width: 100%; height: 100%; }
.navcube { position: absolute; right: 0; top: 0; width: 159px; height: 148px; }
.navtext { font: 28px "DejaVu Sans", sans-serif; }
.navtop { font: italic 33px "DejaVu Sans", sans-serif; fill: #000; stroke: #000; }
.axes { position: absolute; right: 5px; bottom: 21px; width: 36px; height: 30px; }
.axtext { font: 10px "DejaVu Sans", sans-serif; fill: #111; }
.doctabs { display: flex; align-items: flex-start; height: 31px; border-top: 1px solid #b5b2ae; }
.doctab { display: flex; align-items: center; gap: 4px; height: 27px; padding: 0 16px 0 11px; border: 1px solid #b5b2ae; border-top: 0; border-radius: 0 0 3px 3px; background: #dedbd7; }
.doctab.active { height: 30px; margin-left: -1px; margin-top: -1px; padding-right: 15px; background: #f7f4f1; }
.doctab button { margin-left: 4px; }
.doctab button svg { width: 14px; height: 14px; }

.status { flex: none; display: flex; justify-content: space-between; height: 17px; padding: 5px 2px 0; white-space: nowrap; }
.status-right, .nav-style { display: flex; align-items: flex-start; }
.status-right { gap: 12px; }
.nav-style .caret { border-width: 4px 3px 0; margin: 8px 0 0 2px; }
```
